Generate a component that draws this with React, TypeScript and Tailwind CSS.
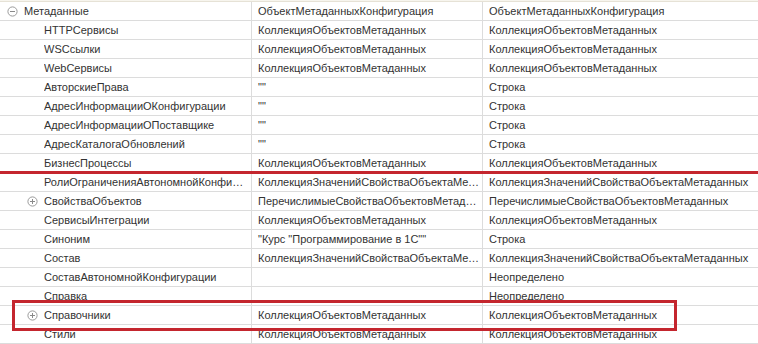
import React from "react";

type Row = { name: string; level: 0 | 1; toggle?: "minus" | "plus"; v1: string; v2: string };

const rows: Row[] = [
  { name: "Метаданные", level: 0, toggle: "minus", v1: "ОбъектМетаданныхКонфигурация", v2: "ОбъектМетаданныхКонфигурация" },
  { name: "HTTPСервисы", level: 1, v1: "КоллекцияОбъектовМетаданных", v2: "КоллекцияОбъектовМетаданных" },
  { name: "WSCсылки", level: 1, v1: "КоллекцияОбъектовМетаданных", v2: "КоллекцияОбъектовМетаданных" },
  { name: "WebСервисы", level: 1, v1: "КоллекцияОбъектовМетаданных", v2: "КоллекцияОбъектовМетаданных" },
  { name: "АвторскиеПрава", level: 1, v1: '""', v2: "Строка" },
  { name: "АдресИнформацииОКонфигурации", level: 1, v1: '""', v2: "Строка" },
  { name: "АдресИнформацииОПоставщике", level: 1, v1: '""', v2: "Строка" },
  { name: "АдресКаталогаОбновлений", level: 1, v1: '""', v2: "Строка" },
  { name: "БизнесПроцессы", level: 1, v1: "КоллекцияОбъектовМетаданных", v2: "КоллекцияОбъектовМетаданных" },
  { name: "РолиОграниченияАвтономнойКонфигурации", level: 1, v1: "КоллекцияЗначенийСвойстваОбъектаМетаданных", v2: "КоллекцияЗначенийСвойстваОбъектаМетаданных" },
  { name: "СвойстваОбъектов", level: 1, toggle: "plus", v1: "ПеречислимыеСвойстваОбъектовМетаданных", v2: "ПеречислимыеСвойстваОбъектовМетаданных" },
  { name: "СервисыИнтеграции", level: 1, v1: "КоллекцияОбъектовМетаданных", v2: "КоллекцияОбъектовМетаданных" },
  { name: "Синоним", level: 1, v1: '"Курс "Программирование в 1С""', v2: "Строка" },
  { name: "Состав", level: 1, v1: "КоллекцияЗначенийСвойстваОбъектаМетаданных", v2: "КоллекцияЗначенийСвойстваОбъектаМетаданных" },
  { name: "СоставАвтономнойКонфигурации", level: 1, v1: "", v2: "Неопределено" },
  { name: "Справка", level: 1, v1: "", v2: "Неопределено" },
  { name: "Справочники", level: 1, toggle: "plus", v1: "КоллекцияОбъектовМетаданных", v2: "КоллекцияОбъектовМетаданных" },
  { name: "Стили", level: 1, v1: "КоллекцияОбъектовМетаданных", v2: "КоллекцияОбъектовМетаданных" },
];

function Toggle({ kind }: { kind: "minus" | "plus" }) {
  return (
    <svg width="11" height="11" viewBox="0 0 11 11" className="shrink-0">
      <circle cx="5.5" cy="5.5" r="4.6" fill="none" stroke="#9a9a9a" strokeWidth="1" />
      <line x1="3" y1="5.5" x2="8" y2="5.5" stroke="#8a8a8a" strokeWidth="1" />
      {kind === "plus" && <line x1="5.5" y1="3" x2="5.5" y2="8" stroke="#8a8a8a" strokeWidth="1" />}
    </svg>
  );
}

export default function App() {
  return (
    <div
      className="relative w-[758px] h-[344px] overflow-hidden bg-white text-[11px] text-[#333333]"
      style={{ fontFamily: '"Liberation Sans", Arial, sans-serif' }}
    >
      <div className="h-[2px] border-b border-[#e6e2d6] bg-[#f7f5ee]" />
      {rows.map((r, i) => (
        <div key={i} className="flex h-[19px] items-center border-b border-[#dcdcdc]">
          <div className="flex w-[252px] h-full items-center overflow-hidden border-r border-[#dcdcdc]">
            <div className={r.level === 0 ? "w-[7px] shrink-0" : "w-[27px] shrink-0"} />
            <div className="w-[17px] shrink-0 flex items-center">
              {r.toggle && <Toggle kind={r.toggle} />}
            </div>
            <span className="truncate pr-[4px] leading-[19px]">{r.name}</span>
          </div>
          <div className="w-[231px] h-full border-r border-[#dcdcdc] pl-[6px] pr-[2px] leading-[19px] truncate">
            {r.v1}
          </div>
          <div className="flex-1 min-w-0 h-full pl-[6px] leading-[19px] truncate">{r.v2}</div>
        </div>
      ))}
      <div className="absolute left-0 right-0 top-[171px] h-[3px] bg-[#c4262e]" />
      <div className="absolute left-[12px] top-[300px] w-[665px] h-[31px] border-[3px] border-[#c4262e]" />
    </div>
  );
}
